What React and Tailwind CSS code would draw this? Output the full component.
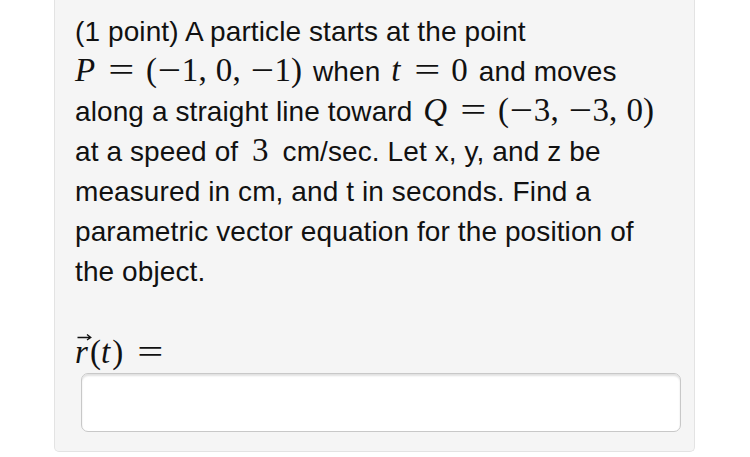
import React from "react";

const M = ({ children, className = "" }) => (
  <span className={`font-['Liberation_Serif',serif] text-[33px] leading-none px-[3px] ${className}`}>{children}</span>
);
const V = ({ children }) => <i className="italic mr-[2px]">{children}</i>;
const Eq = () => <span className="inline-block mx-[15px] scale-x-[1.4]">=</span>;
const C = () => <span className="mr-[9px]">,</span>;
const Minus = () => <span className="inline-block mx-[3px] scale-x-[1.25]">−</span>;

const Line = ({ children }) => <div className="h-[40px] leading-[40px] whitespace-nowrap">{children}</div>;

export default function App() {
  return (
    <div className="w-[750px] h-[457px] bg-white font-['Liberation_Sans',Arial,sans-serif] text-[#111]">
      <div className="ml-[54px] w-[641px] h-[452px] bg-[#f5f5f5] border border-t-0 border-[#e3e3e3] rounded-b-[5px] pl-[20px] pr-[13px] pt-[12px]">
        <div className="text-[28px] tracking-[0.1px]">
          <Line>(1 point) A particle starts at the point</Line>
          <Line>
            <M className="!pl-0">
              <V>P</V>
              <Eq />
              (<Minus />1<C />0<C /><Minus />1)
            </M>{" "}
            when{" "}
            <M>
              <V>t</V>
              <Eq />0
            </M>{" "}
            and moves
          </Line>
          <Line>
            along a straight line toward{" "}
            <M>
              <V>Q</V>
              <Eq />
              (<Minus />3<C /><Minus />3<C />0)
            </M>
          </Line>
          <Line>
            at a speed of <M className="!px-[6px]">3</M> cm/sec. Let x, y, and z be
          </Line>
          <Line>measured in cm, and t in seconds. Find a</Line>
          <Line>parametric vector equation for the position of</Line>
          <Line>the object.</Line>
          <div className="mt-[44px] h-[36px] leading-[36px] whitespace-nowrap">
            <M className="!pl-0">
              <span className="relative inline-block">
                <V>r</V>
                <svg className="absolute left-[2px] top-[-3px]" width="15" height="8" viewBox="0 0 15 8">
                  <path d="M0.5 4.5 H13.5 M10 1.5 L13.8 4.5 L10 7" stroke="#111" strokeWidth="1.3" fill="none" />
                </svg>
              </span>
              (<V>t</V>)<span className="inline-block mx-[18px] scale-x-[1.4]">=</span>
            </M>
          </div>
        </div>
        <input
          type="text"
          className="block mt-[1px] ml-[6px] w-[600px] h-[59px] bg-white border border-[#c8c8c8] rounded-[7px] shadow-[inset_0_2px_2px_rgba(0,0,0,0.12)] outline-none"
        />
      </div>
    </div>
  );
}
